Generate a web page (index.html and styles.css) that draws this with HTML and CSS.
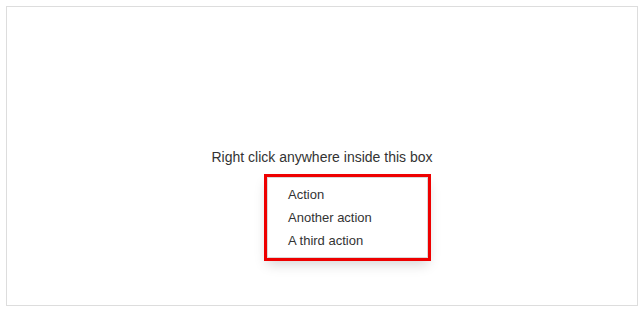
FILE: index.html
```html
<!DOCTYPE html>
<html>
<head>
<meta charset="utf-8">
<link rel="stylesheet" href="styles.css">
</head>
<body>
<div class="box">
  <p class="hint">Right click anywhere inside this box</p>
  <ul class="menu">
    <li><a href="#">Action</a></li>
    <li><a href="#">Another action</a></li>
    <li><a href="#">A third action</a></li>
  </ul>
</div>
</body>
</html>
```
FILE: styles.css
```css
html, body {
  margin: 0;
  padding: 0;
  background: #fff;
}
body {
  padding: 6px;
  font-family: "Liberation Sans", Arial, sans-serif;
  color: #333;
}
.box {
  position: relative;
  box-sizing: border-box;
  width: 632px;
  height: 300px;
  border: 1px solid #ddd;
  display: flex;
  align-items: center;
  justify-content: center;
}
.hint {
  margin: 0;
  font-size: 14px;
  line-height: 20px;
  color: #333;
  position: relative;
  top: 1px;
}
.menu {
  position: absolute;
  left: 260px;
  top: 170px;
  box-sizing: border-box;
  width: 161px;
  margin: 0;
  padding: 5px 0;
  list-style: none;
  background: #fff;
  border: 1px solid rgba(0,0,0,.15);
  box-shadow: 0 6px 12px rgba(0,0,0,.175);
  outline: 3px solid #e00;
}
.menu a {
  display: block;
  padding: 3px 20px;
  font-size: 13px;
  line-height: 17px;
  color: #333;
  text-decoration: none;
}
```
